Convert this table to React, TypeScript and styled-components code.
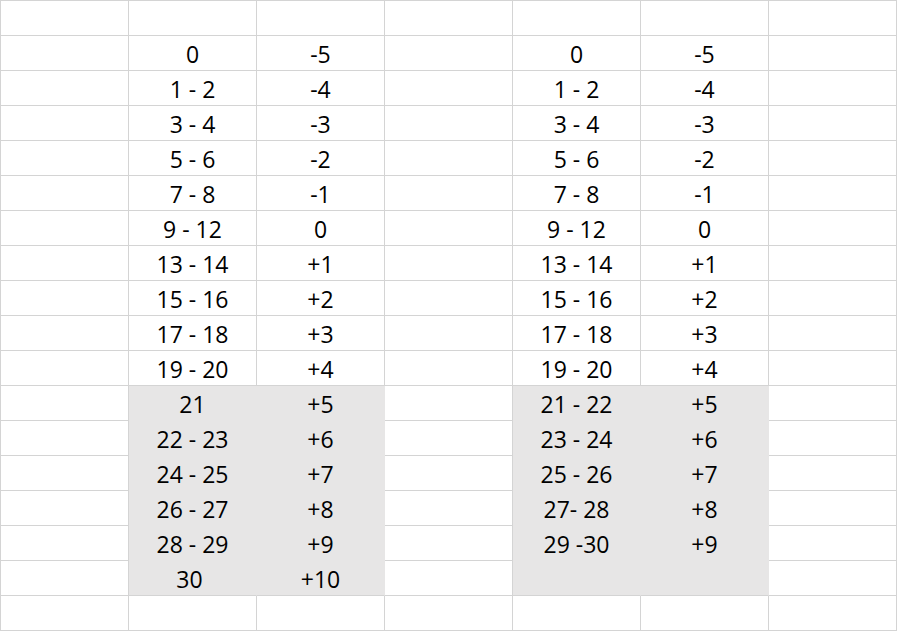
import * as React from "react";
import styled, { createGlobalStyle } from "styled-components";

const GlobalStyle = createGlobalStyle`
  html, body {
    margin: 0;
    padding: 0;
    background: #ffffff;
  }
`;

type Cell = string | null;

const leftTable: [string, string][] = [
  ["0", "-5"],
  ["1 - 2", "-4"],
  ["3 - 4", "-3"],
  ["5 - 6", "-2"],
  ["7 - 8", "-1"],
  ["9 - 12", "0"],
  ["13 - 14", "+1"],
  ["15 - 16", "+2"],
  ["17 - 18", "+3"],
  ["19 - 20", "+4"],
  ["21", "+5"],
  ["22 - 23", "+6"],
  ["24 - 25", "+7"],
  ["26 - 27", "+8"],
  ["28 - 29", "+9"],
  ["30 ", "+10"],
];

const rightTable: [string, string][] = [
  ["0", "-5"],
  ["1 - 2", "-4"],
  ["3 - 4", "-3"],
  ["5 - 6", "-2"],
  ["7 - 8", "-1"],
  ["9 - 12", "0"],
  ["13 - 14", "+1"],
  ["15 - 16", "+2"],
  ["17 - 18", "+3"],
  ["19 - 20", "+4"],
  ["21 - 22", "+5"],
  ["23 - 24", "+6"],
  ["25 - 26", "+7"],
  ["27- 28", "+8"],
  ["29 -30", "+9"],
  ["", ""],
];

const COLS = 7;
const ROWS = 18;

const App: React.FC = () => {
  const cells: { text: Cell; shaded: boolean; lastShaded: boolean }[] = [];

  for (let r = 0; r < ROWS; r++) {
    for (let c = 0; c < COLS; c++) {
      let text: Cell = null;
      const dataRow = r - 1;
      const inData = dataRow >= 0 && dataRow < 16;
      if (inData && (c === 1 || c === 2)) text = leftTable[dataRow][c - 1];
      if (inData && (c === 4 || c === 5)) text = rightTable[dataRow][c - 4];
      const shaded = inData && dataRow >= 10 && (c === 1 || c === 2 || c === 4 || c === 5);
      cells.push({ text, shaded, lastShaded: shaded && dataRow === 15 });
    }
  }

  return (
    <>
      <GlobalStyle />
      <Sheet>
        {cells.map((cell, i) => (
          <GridCell key={i} $shaded={cell.shaded} $last={cell.lastShaded}>
            {cell.text}
          </GridCell>
        ))}
      </Sheet>
    </>
  );
};

//Styled components

const Sheet = styled.div`
  display: grid;
  grid-template-columns: repeat(${COLS}, 128px);
  grid-template-rows: repeat(${ROWS}, 35px);
  border-top: 1px solid #d4d4d4;
  border-left: 1px solid #d4d4d4;
  width: max-content;
  font-family: "Open Sans", "Liberation Sans", sans-serif;
  font-size: 23px;
  color: #000000;
`;

const GridCell = styled.div<{ $shaded: boolean; $last: boolean }>`
  box-sizing: border-box;
  border-right: 1px solid ${(p) => (p.$shaded ? "#e7e6e6" : "#d4d4d4")};
  border-bottom: 1px solid
    ${(p) => (p.$shaded && !p.$last ? "#e7e6e6" : "#d4d4d4")};
  background: ${(p) => (p.$shaded ? "#e7e6e6" : "#ffffff")};
  line-height: 34px;
  padding-top: 1px;
  text-align: center;
  white-space: pre;
  overflow: hidden;
`;

export default App;
